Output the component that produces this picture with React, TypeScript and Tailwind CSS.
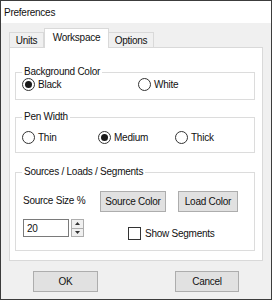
import React, { useState } from 'react';

function Radio({ checked, label, className = '' }: { checked?: boolean; label: string; className?: string }) {
  return (
    <label className={`flex items-center h-[12px] ${className}`}>
      <span className="w-[13px] h-[13px] rounded-full border border-[#333333] bg-white flex items-center justify-center shrink-0">
        {checked && <span className="w-[7px] h-[7px] rounded-full bg-[#1a1a1a]" />}
      </span>
      <span className="ml-[3px]">{label}</span>
    </label>
  );
}

function WinButton({ label, className = '' }: { label: string; className?: string }) {
  return (
    <button className={`h-[21px] border border-[#adadad] bg-[#e1e1e1] flex items-center justify-center whitespace-nowrap ${className}`}>
      {label}
    </button>
  );
}

function Group({ title, className = '', children }: { title: string; className?: string; children: React.ReactNode }) {
  return (
    <fieldset className={`border border-[#dcdcdc] px-[6px] ${className}`}>
      <legend className="px-[2px] leading-[12px]">{title}</legend>
      {children}
    </fieldset>
  );
}

export default function App() {
  const [bg] = useState('black');
  const [pen] = useState('medium');

  return (
    <div className="w-[272px] h-[300px] border border-[#3c3c3c] bg-[#f0f0f0] flex flex-col font-['Liberation_Sans',Arial,sans-serif] text-[10px] tracking-[-0.25px] text-[#111111]">
      <div className="h-[22px] bg-white flex items-center pl-[3px] shrink-0">Preferences</div>

      <div className="px-[8px] pt-[5px]">
        <div className="flex items-end h-[19px]">
          <div className="w-[35px] h-[15px] border border-b-0 border-[#d9d9d9] flex items-center justify-center">Units</div>
          <div className="relative z-10 w-[65px] h-[20px] -mb-px bg-white border border-b-0 border-[#d9d9d9] flex items-center justify-center pb-[2px]">Workspace</div>
          <div className="w-[45px] h-[15px] border border-b-0 border-l-0 border-[#d9d9d9] flex items-center justify-center">Options</div>
        </div>

        <div className="h-[214px] border border-[#d9d9d9] bg-white pl-[5px] pr-[7px] flex flex-col">
          <Group title="Background Color" className="mt-[18px]">
            <div className="flex pb-[9px]">
              <Radio checked={bg === 'black'} label="Black" className="w-[116px]" />
              <Radio checked={bg === 'white'} label="White" />
            </div>
          </Group>

          <Group title="Pen Width" className="mt-[11px]">
            <div className="flex pt-[8px] pb-[9px]">
              <Radio checked={pen === 'thin'} label="Thin" className="w-[76px]" />
              <Radio checked={pen === 'medium'} label="Medium" className="w-[77px]" />
              <Radio checked={pen === 'thick'} label="Thick" />
            </div>
          </Group>

          <Group title="Sources / Loads / Segments" className="mt-[13px]">
            <div className="flex pb-[9px]">
              <div className="w-[78px] pl-[1px]">
                <div className="mt-[17px] leading-[12px]">Source Size %</div>
                <div className="mt-[12px] flex gap-[2px]">
                  <div className="w-[46px] h-[18px] border border-[#7a7a7a] bg-white flex items-center pl-[3px]">20</div>
                  <div className="w-[13px] h-[18px] border border-[#adadad] flex flex-col">
                    <div className="flex-1 flex items-center justify-center border-b border-[#adadad] bg-[#f0f0f0]">
                      <svg width="5" height="3" viewBox="0 0 5 3"><path d="M0 3 L2.5 0 L5 3 Z" fill="#333" /></svg>
                    </div>
                    <div className="flex-1 flex items-center justify-center bg-[#f0f0f0]">
                      <svg width="5" height="3" viewBox="0 0 5 3"><path d="M0 0 L2.5 3 L5 0 Z" fill="#333" /></svg>
                    </div>
                  </div>
                </div>
              </div>
              <div className="flex flex-col">
                <div className="mt-[13px] flex gap-[12px]">
                  <WinButton label="Source Color" className="w-[66px]" />
                  <WinButton label="Load Color" className="w-[60px]" />
                </div>
                <label className="mt-[14px] ml-[28px] flex items-center">
                  <span className="w-[13px] h-[13px] border border-[#333333] bg-white shrink-0" />
                  <span className="ml-[4px]">Show Segments</span>
                </label>
              </div>
            </div>
          </Group>
        </div>
      </div>

      <div className="flex justify-between px-[32px] mt-[10px]">
        <WinButton label="OK" className="w-[65px]" />
        <WinButton label="Cancel" className="w-[64px]" />
      </div>
    </div>
  );
}
